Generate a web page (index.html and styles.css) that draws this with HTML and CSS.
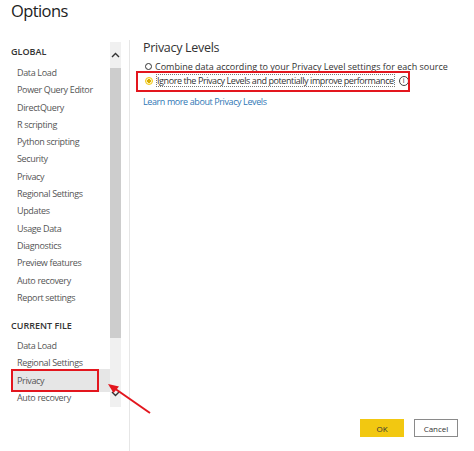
FILE: index.html
```html
<!DOCTYPE html>
<html lang="en">
<head>
    <meta charset="UTF-8">
    <meta name="viewport" content="width=device-width, initial-scale=1.0">
    <title>Options</title>
    <link rel="stylesheet" href="styles.css">
</head>
<body>
    <div class="dialog">
        <h1 class="title">Options</h1>

        <div class="body">
            <nav class="sidebar">
                <div class="group-label">GLOBAL</div>
                <div class="item">Data Load</div>
                <div class="item">Power Query Editor</div>
                <div class="item">DirectQuery</div>
                <div class="item">R scripting</div>
                <div class="item">Python scripting</div>
                <div class="item">Security</div>
                <div class="item">Privacy</div>
                <div class="item">Regional Settings</div>
                <div class="item">Updates</div>
                <div class="item">Usage Data</div>
                <div class="item">Diagnostics</div>
                <div class="item">Preview features</div>
                <div class="item">Auto recovery</div>
                <div class="item">Report settings</div>

                <div class="group-label group-current">CURRENT FILE</div>
                <div class="item">Data Load</div>
                <div class="item">Regional Settings</div>
                <div class="item active">Privacy</div>
                <div class="item">Auto recovery</div>
            </nav>

            <div class="scrollbar">
                <div class="scroll-btn">
                    <svg width="9" height="6" viewBox="0 0 9 6"><path d="M1 5 L4.5 1.5 L8 5" fill="none" stroke="#333" stroke-width="1.4"/></svg>
                </div>
                <div class="scroll-thumb"></div>
                <div class="scroll-track"></div>
                <div class="scroll-btn">
                    <svg width="9" height="6" viewBox="0 0 9 6"><path d="M1 1 L4.5 4.5 L8 1" fill="none" stroke="#333" stroke-width="1.4"/></svg>
                </div>
            </div>

            <div class="divider"></div>

            <section class="content">
                <h2 class="section-title">Privacy Levels</h2>
                <label class="option">
                    <span class="radio"></span>
                    <span>Combine data according to your Privacy Level settings for each source</span>
                </label>
                <label class="option option-marked">
                    <span class="radio checked"></span>
                    <span class="focus-text">Ignore the Privacy Levels and potentially improve performance</span>
                    <span class="info">i</span>
                </label>
                <a class="link" href="#">Learn more about Privacy Levels</a>
            </section>
        </div>

        <div class="footer">
            <button class="btn btn-ok">OK</button>
            <button class="btn btn-cancel">Cancel</button>
        </div>

        <!-- callout arrow pointing at the selected page -->
        <svg class="callout" width="60" height="40" viewBox="0 0 60 40">
            <line x1="50" y1="36" x2="14" y2="11" stroke="#e3161e" stroke-width="2"/>
            <path d="M8 7 L19 9.5 L13.5 16 Z" fill="#e3161e"/>
        </svg>
    </div>
</body>
</html>
```

FILE: styles.css
```css
body {
    margin: 0;
    padding: 0;
    background: #fff;
    font-family: "Open Sans", Arial, sans-serif;
    color: #333;
}
.dialog {
    position: relative;
    width: 474px;
    height: 451px;
    display: flex;
    flex-direction: column;
    overflow: hidden;
}
.title {
    margin: 0;
    padding: 0 11px;
    font-size: 16.5px;
    font-weight: 400;
    letter-spacing: -0.6px;
    line-height: 22px;
    color: #222;
}
.body {
    display: flex;
    height: 389px;
    margin-top: 18px;
}

/* left navigation */
.sidebar {
    width: 99px;
    padding-left: 11px;
    font-size: 9px;
}
.group-label {
    font-weight: 600;
    line-height: 17px;
    margin-top: 3px;
    margin-bottom: 4px;
    color: #333;
}
.group-current {
    margin-top: 11px;
    margin-bottom: 3px;
}
.item {
    position: relative;
    padding-left: 6px;
    line-height: 17.3px;
    letter-spacing: -0.35px;
    color: #555;
    white-space: nowrap;
}
.item.active::before {
    content: "";
    position: absolute;
    left: 0;
    right: -11px;
    top: -3px;
    bottom: -3px;
    background: #e6e6e6;
    z-index: -1;
}
.item.active::after {
    content: "";
    position: absolute;
    left: 0;
    width: 84px;
    top: -3px;
    bottom: -3px;
    border: 2px solid #e3161e;
}

/* scrollbar */
.scrollbar {
    width: 11px;
    margin-top: 2px;
    height: 365px;
    display: flex;
    flex-direction: column;
    background: #f0f0f0;
}
.scroll-btn {
    height: 26px;
    display: flex;
    align-items: center;
    justify-content: center;
}
.scroll-thumb {
    height: 270px;
    background: #cdcdcd;
}
.scroll-track {
    flex: 1;
}
.divider {
    width: 1px;
    margin-left: 8px;
    height: 411px;
    background: #e6e6e6;
}

/* right panel */
.content {
    position: relative;
    padding-left: 13px;
    margin-top: -1px;
    font-size: 9px;
}
.section-title {
    margin: 0 0 2px;
    font-size: 12.5px;
    font-weight: 400;
    letter-spacing: -0.3px;
    line-height: 18px;
    color: #333;
}
.option {
    display: flex;
    align-items: center;
    gap: 3px;
    line-height: 15px;
    padding-left: 2px;
    white-space: nowrap;
    color: #333;
}
.option-marked {
    position: relative;
}
.option-marked::after {
    content: "";
    position: absolute;
    left: -7px;
    top: -3px;
    width: 274px;
    height: 21px;
    border: 2px solid #e3161e;
    box-sizing: border-box;
}
.radio {
    width: 7px;
    height: 7px;
    border: 1px solid #333;
    border-radius: 50%;
    box-sizing: border-box;
    flex-shrink: 0;
}
.radio.checked {
    border: 1.5px solid #f2c811;
    background: radial-gradient(circle, #d8ae00 0 1.6px, #fff5c2 1.9px);
    width: 8px;
    height: 8px;
}
.focus-text {
    border: 1px dotted #777;
    line-height: 11px;
    letter-spacing: -0.42px;
}
.info {
    width: 8px;
    height: 8px;
    border: 1px solid #444;
    border-radius: 50%;
    font-size: 7px;
    line-height: 8px;
    text-align: center;
    margin-left: 1px;
}
.link {
    display: block;
    margin-top: 8px;
    color: #2f77b5;
    text-decoration: none;
    line-height: 14px;
    letter-spacing: -0.4px;
}

/* footer buttons */
.footer {
    display: flex;
    justify-content: flex-end;
    gap: 10px;
    padding-right: 16px;
    margin-top: -10px;
}
.btn {
    width: 44px;
    height: 18px;
    padding: 0;
    font-family: "Open Sans", Arial, sans-serif;
    font-size: 8px;
    color: #333;
    cursor: pointer;
}
.btn-ok {
    background: #f2c811;
    border: none;
}
.btn-cancel {
    background: #fff;
    border: 1px solid #8a8a8a;
}
.callout {
    position: absolute;
    left: 100px;
    top: 377px;
}
```
